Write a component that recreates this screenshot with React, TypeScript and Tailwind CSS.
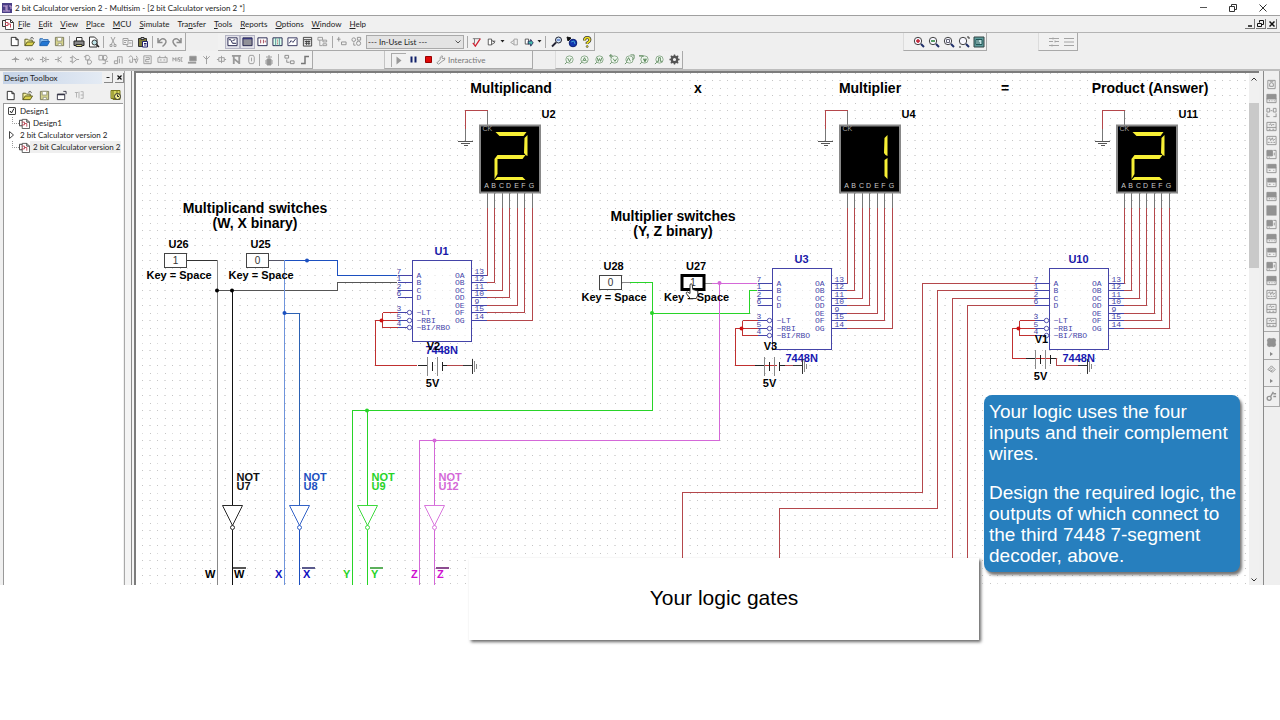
import type { ReactNode } from "react";

const RED = "#b4474b";
const PIN = "#4444a8";
const SANS = "'Liberation Sans', Arial, sans-serif";
const MONO = "'Liberation Mono', 'Courier New', monospace";

function Icon({ children, size = 12 }: { children: ReactNode; size?: number }) {
  return (
    <svg width={size} height={size} viewBox="0 0 12 12" fill="none" strokeWidth="1" stroke="currentColor" aria-hidden="true">
      {children}
    </svg>
  );
}

function Tool({ label, children, pressed }: { label: string; children: ReactNode; pressed?: boolean }) {
  return (
    <button
      type="button"
      aria-label={label}
      className={
        pressed
          ? "flex h-[14px] w-[15px] shrink-0 items-center justify-center border border-[#b4b4c4] bg-[#e2e2ea]"
          : "flex h-[14px] w-[15px] shrink-0 items-center justify-center"
      }
    >
      {children}
    </button>
  );
}

function Sep() {
  return (
    <span className="flex w-1 shrink-0 justify-center">
      <span className="h-3 w-px bg-[#a8a8a8]" />
    </span>
  );
}

function Bar({ children, className = "" }: { children: ReactNode; className?: string }) {
  return (
    <div className={"flex h-[18px] shrink-0 items-center border-r border-b border-[#a9a9a9] bg-[#f1f1f1] " + className}>
      {children}
    </div>
  );
}

function DropArrow({ label }: { label: string }) {
  return (
    <button type="button" aria-label={label} className="flex w-[7px] shrink-0 justify-center">
      <svg width="5" height="3" viewBox="0 0 5 3"><path d="M0.5 0h4L2.5 2.5z" fill="#222" /></svg>
    </button>
  );
}

const newFile = <path d="M2.5 1.5h5l2.5 2.5v6.5h-7.5zM7.5 1.5v2.5h2.5" fill="#fff" stroke="#222" />;
const openFile = (
  <>
    <path d="M1 10.5V3.5h3l1 1h4v2" fill="#f4f0a0" stroke="#55551c" />
    <path d="M1 10.5l2.500-4h8l-2.500 4z" fill="#d8d04c" stroke="#55551c" />
    <path d="M7 2.500q2-2 3.500 0.500" stroke="#333" />
  </>
);
const saveFile = (
  <>
    <path d="M1.500 1.500h9v9h-9z" fill="#d4d28c" stroke="#77775a" />
    <path d="M3.500 1.500h5v4h-5zM4.500 8h3.500v2.500h-3.500z" fill="#fff" stroke="#9a9a80" />
  </>
);
const schematicIcon = (
  <>
    <path d="M3.500 1.500h5l3 3v7h-8z" fill="#fff" stroke="#555" />
    <path d="M8.500 1.500v3h3" stroke="#333" />
    <path d="M0.500 2.500h3M0.500 8.500h3M0.500 2.500v6" stroke="#333" />
    <path d="M3 4.500h3v3H3M6 6h2.500M8.500 6v3.500" stroke="#c04858" />
  </>
);

const fileTools = [
  { label: "New", icon: newFile },
  { label: "Open", icon: openFile },
  {
    label: "Open samples",
    icon: (
      <>
        <path d="M1 10.500V3h3l1 1h5v2" fill="#8cc0f0" stroke="#1d5fae" />
        <path d="M1 10.500l2-4.500h8.500l-2.500 4.500z" fill="#2277d4" stroke="#1d5fae" />
      </>
    ),
  },
  { label: "Save", icon: saveFile },
];

const printTools = [
  {
    label: "Print",
    icon: (
      <>
        <path d="M3.500 5V1.500h5.500V5" fill="#fff" stroke="#333" />
        <path d="M1 5h10v4.500H1z" fill="#888" stroke="#222" />
        <path d="M3 8.500h6v2H3z" fill="#e4e08a" stroke="#333" />
      </>
    ),
  },
  {
    label: "Print preview",
    icon: (
      <>
        <path d="M1.500 1h5l2.500 2.500v7.500h-7.500z" fill="#fff" stroke="#333" />
        <circle cx="6.500" cy="6.500" r="2.500" fill="#bfe4e8" stroke="#333" />
        <path d="M8.500 8.500l2.500 2.500" stroke="#222" strokeWidth="1.500" />
      </>
    ),
  },
];

const editTools = [
  {
    label: "Cut",
    icon: <path d="M4 1l3.500 7M8 1L4.500 8M3 8.500h2v2H3zM7 8.500h2v2H7z" stroke="#a0a0a0" />,
  },
  {
    label: "Copy",
    icon: <path d="M1 2.500h5v6H1zM6 4.500h4.500v6H5V8.500M2 4.500h3M2 6.500h2M7 7h2.500" stroke="#a0a0a0" />,
  },
  {
    label: "Paste",
    icon: (
      <>
        <path d="M1.500 2.500h8v8h-8z" fill="#7f7b3a" stroke="#333" />
        <path d="M4 1.500h3v2H4z" fill="#ccc" stroke="#333" />
        <path d="M5.500 5.500h5v5.500h-5z" fill="#fff" stroke="#20206a" />
        <path d="M7 7.500h2.500M7 9h2.500" stroke="#20206a" />
      </>
    ),
  },
];

const historyTools = [
  { label: "Undo", icon: <path d="M2 2v4.500h4.500M2.500 6Q6 1 9 3.500T6.500 10.500" stroke="#8c8c8c" strokeWidth="1.500" /> },
  { label: "Redo", icon: <path d="M10 2v4.500H5.500M9.500 6Q6 1 3 3.500T5.500 10.500" stroke="#8c8c8c" strokeWidth="1.500" /> },
];

const viewTools = [
  { label: "Design toolbox", icon: <path d="M1 2h10v8.500H1zM2 4h2l2 4h4M6 5l3-1" fill="#fff" stroke="#20204a" />, pressed: true },
  { label: "Spreadsheet view", icon: <><path d="M1 2h10v8.500H1z" fill="#909098" stroke="#20204a" /><path d="M1 3h10" stroke="#20207a" /></>, pressed: true },
  { label: "SPICE netlist viewer", icon: <><path d="M1 2h10v8.500H1z" fill="#fff" stroke="#20204a" /><path d="M4 4v4M7 4v4M9 5v2" stroke="#a04050" /></> },
  { label: "Breadboard view", icon: <><path d="M1 2h10v8.500H1z" fill="#dfe" stroke="#20204a" /><path d="M4 2v8.500M8 2v8.500" stroke="#4d8c8c" /><path d="M6 4v5" stroke="#b04050" strokeDasharray="1 1" /></> },
  { label: "Grapher", icon: <path d="M1 2h10v8.500H1zM2.500 8l2-3 2 2 3-4" fill="#fff" stroke="#30305a" /> },
  { label: "Postprocessor", icon: <path d="M1.500 1.500h9v9.500h-9zM2 4h8M3 6h6M3 8h6M5 5v5M7.500 5v5" fill="#e8e8e8" stroke="#404040" /> },
  { label: "Parent sheet", icon: <path d="M1 1.500h5v3H1zM6.500 4.500h4v2h-4zM6.500 8.500h4v2h-4zM3 4.500v6h3" stroke="#999" /> },
];

const componentTools = [
  { label: "Create component", icon: <path d="M3 1v5M1 3.500h4M6 6.500h5v3H6z" stroke="#8f8f8f" /> },
  { label: "Database manager", icon: <path d="M1 4a2 2 0 1 0 4 0a2 2 0 1 0-4 0M7 1.500h3.500v3H7zM6 8a2 2 0 1 0 4.500 0a2 2 0 1 0-4.500 0M3 7v3h2" stroke="#8f8f8f" /> },
];

const placeTools = [
  { label: "Source", icon: <path d="M2 6h8M6 3v6M4 5h4" /> },
  { label: "Basic", icon: <path d="M1 6h1l1-2 1.500 3.500L6 4l1.500 3.500L9 4l1 2h1" /> },
  { label: "Diode", icon: <path d="M1 6h3M4 3v6l3-3zM7.500 3v6M8 6h3" /> },
  { label: "Transistor", icon: <path d="M1 6h3M4.500 3v6M4.500 6l4-3M4.500 6l4 3" /> },
  { label: "Analog", icon: <path d="M3.500 2v8l5-4zM1 4h2.500M1 8h2.500M8.500 6H11" /> },
  { label: "TTL", icon: <path d="M3 1.500h3q3 2 0 5H3zM1 3h2M5 6.500h3q3 2 0 4.500H5z" /> },
  { label: "CMOS", icon: <path d="M1 1.500h4v5H1zM6 1.500h3q2 2 0 5H6zM5 6.500h3v4H5M9 8h2" /> },
  { label: "Misc digital", icon: <path d="M5 3h5v7.500M5 3v7.500H1.500V7.500H5M7 5v5" /> },
  { label: "Mixed", icon: <path d="M1 4q2-4 4 0v5H2V6M6 6h3q2-2 0-4M7 5l2 5 2-5" /> },
  { label: "Indicator", icon: <path d="M2 2h8v8.500H2zM4 4h4v2H4v2.500h4" /> },
  { label: "Power", icon: <path d="M1 4h10v5H1zM3 6.500h2M7 6.500h2M3 2v2M9 2v2" /> },
  { label: "Misc", icon: <path d="M1 8V4l1.500 2L4 4v4M5.500 4v4M9 4H7v2h1.500v2H7M11.500 4h-1.500v4h1.500" /> },
  { label: "Peripherals", icon: <><path d="M3 2.500h7v5H3z" fill="#8f8f8f" /><path d="M1 9.500h9" strokeWidth="2" /></> },
  { label: "RF", icon: <path d="M6 11V2M2.500 2.500L6 6l3.500-3.500" /> },
  { label: "Electromechanical", icon: <path d="M1 6h2M9 6h2M3 4h6v4H3zM6 2v8" /> },
  { label: "NI component", icon: <path d="M1 2h10M3 2v9M9 2v9M3 5l6 5" strokeWidth="2" /> },
  { label: "Connector", icon: <path d="M4 1.500h4l1 2v5l-1 2H4l-1-2v-5zM6 4v4" /> },
];

const probeTools = [
  { label: "Voltage probe", icon: <path d="M4 4.500l2 4 2-4" /> },
  { label: "Current probe", icon: <path d="M4 8l2-4 2 4M5 7h2" /> },
  { label: "Power probe", icon: <path d="M3.500 4l1.200 4L6 5l1.200 3L8.500 4" /> },
  { label: "Differential probe", icon: <path d="M4.500 5l2 3 2-3M0 2h4M2 0v4" /> },
  { label: "Voltage and current probe", icon: <path d="M3 8l2-4 2 4M7 1h4v4L9 6" /> },
  { label: "Voltage reference", icon: <path d="M0 2h5M5 5l1.500 3L8 5" strokeWidth="1.500" /> },
  { label: "Digital probe", icon: <path d="M3 8h2V4h2v4h2" /> },
];

const zoomTools = [
  { label: "Zoom in", mark: <path d="M3 5h4M5 3v4" stroke="#c02030" strokeWidth="1.500" /> },
  { label: "Zoom out", mark: <path d="M3 5h4" stroke="#208030" strokeWidth="1.500" /> },
  { label: "Zoom area", mark: <path d="M3.500 3.500h3v3h-3z" stroke="#667" /> },
  { label: "Zoom sheet", mark: <path d="M9 1h2v2M1 11h2" stroke="#333" /> },
];

const menus = ["File", "Edit", "View", "Place", "MCU", "Simulate", "Transfer", "Tools", "Reports", "Options", "Window", "Help"];
const accessIndex: Record<string, number> = { Transfer: 3 };

const instruments = [
  "Multimeter", "Function generator", "Wattmeter", "Oscilloscope", "Four channel oscilloscope", "Bode plotter",
  "Frequency counter", "Word generator", "Logic converter", "Logic analyzer", "IV analyzer", "Distortion analyzer",
  "Spectrum analyzer", "Network analyzer", "Agilent function generator", "Agilent multimeter", "Agilent oscilloscope",
  "Tektronix oscilloscope",
];

// Instrument glyphs repeat a handful of panel layouts
const panels = [
  <path d="M2 1.500h8v9H2zM4 3h4M4 5l2-1 2 1v3H4z" />,
  <><path d="M1 1.500h10v5H1z" fill="#929292" /><path d="M1 6v4.500h10V6M3 8.500h1.500M6 8.500h1M8.500 8.500h1" /></>,
  <path d="M1 1.500h3v4H1zM8 1.500h3v4H8zM1 7v4M1 10.500h3M11 7v4M8 10.500h3M5 4h2" />,
  <path d="M1 1.500h10v9H1zM1 7h10M3 4h1l1-1 1 2 1-1h2M3 9h2M7 9h2" />,
  <path d="M1 1.500h10v9H1zM2 5l2-2 1 3 2-3 1 3 2-2M2 8h2M5 8h2M8 8h2" />,
  <><path d="M1 1.500h6v6H1z" fill="#929292" /><path d="M1 8v2.500h10V1.500H8M3 9h1M9 4v3" /></>,
  <><path d="M2 1.500h9v4H2z" fill="#929292" /><path d="M1 1v9.500h10V5M3 8h2M8 8h1" /></>,
];
const panelOrder = [0, 1, 2, 3, 4, 5, 6, 6, 1, 7, 5, 1, 6, 5, 1, 4, 3, 3];

function TitleBar() {
  return (
    <header className="flex h-4 items-center border-b border-[#a0a0a0] bg-white pl-0.5 text-[8px] text-[#222]">
      <svg width="10" height="10" viewBox="0 0 10 10" aria-hidden="true">
        <rect width="10" height="10" fill="#4a3f86" />
        <path d="M1 3h3v4M5 2v6M7 3h2v3M1 8h7" stroke="#c9a9d8" fill="none" />
      </svg>
      <h1 className="ml-[3px] whitespace-nowrap">2 bit Calculator version 2 - Multisim - [2 bit Calculator version 2 *]</h1>
      <div className="ml-auto flex pr-0.5">
        <button type="button" aria-label="Minimize" className="flex h-[14px] w-[30px] items-center justify-center">
          <svg width="7" height="7" viewBox="0 0 7 7" stroke="#555"><path d="M0 3.500h7" /></svg>
        </button>
        <button type="button" aria-label="Restore" className="flex h-[14px] w-[30px] items-center justify-center">
          <svg width="8" height="8" viewBox="0 0 8 8" fill="none" stroke="#333"><path d="M0.500 2.500h5v5h-5zM2.500 2V0.500h5v5H6" /></svg>
        </button>
        <button type="button" aria-label="Close" className="flex h-[14px] w-[30px] items-center justify-center">
          <svg width="8" height="8" viewBox="0 0 8 8" stroke="#333"><path d="M0.500 0.500l7 7M7.500 0.500l-7 7" /></svg>
        </button>
      </div>
    </header>
  );
}

function MenuBar() {
  return (
    <nav className="flex h-[17px] items-center border-b border-[#b4b4b4] bg-[#f0f0f0] pl-0.5 text-[8px] text-[#222]">
      <Icon>{schematicIcon}</Icon>
      <div className="ml-1 flex gap-2">
        {menus.map((menu) => {
          const i = accessIndex[menu] ?? 0;
          return (
            <button key={menu} type="button">
              {menu.slice(0, i)}
              <span className="underline">{menu[i]}</span>
              {menu.slice(i + 1)}
            </button>
          );
        })}
      </div>
      <div className="ml-auto flex gap-px pr-[3px]">
        <button type="button" aria-label="Minimize document" className="flex h-[10px] w-[10px] items-center justify-center border-r border-b border-[#777]">
          <svg width="6" height="6" viewBox="0 0 6 6" stroke="#111"><path d="M1 5h4" strokeWidth="1.500" /></svg>
        </button>
        <button type="button" aria-label="Restore document" className="flex h-[10px] w-[10px] items-center justify-center border-r border-b border-[#777]">
          <svg width="7" height="7" viewBox="0 0 7 7" fill="none" stroke="#111"><path d="M0.500 3.500h4v3h-4zM2.500 2.500v-2h4v4h-2" /></svg>
        </button>
        <button type="button" aria-label="Close document" className="flex h-[10px] w-[10px] items-center justify-center border-r border-b border-[#777]">
          <svg width="6" height="6" viewBox="0 0 6 6" stroke="#111" strokeWidth="1.500"><path d="M0.500 0.500l5 5M5.500 0.500l-5 5" /></svg>
        </button>
      </div>
    </nav>
  );
}

function MainToolbar() {
  return (
    <div className="flex h-[18px] bg-[#efefef]">
      <Bar className="pl-[7px] pr-px">
        {fileTools.map((t) => <Tool key={t.label} label={t.label}><Icon size={11}>{t.icon}</Icon></Tool>)}
        <Sep />
        {printTools.map((t) => <Tool key={t.label} label={t.label}><Icon>{t.icon}</Icon></Tool>)}
        <Sep />
        {editTools.map((t) => <Tool key={t.label} label={t.label}><Icon>{t.icon}</Icon></Tool>)}
        <Sep />
        {historyTools.map((t) => <Tool key={t.label} label={t.label}><Icon>{t.icon}</Icon></Tool>)}
      </Bar>
      <Bar className="ml-8 pl-[7px]">
        {viewTools.map((t) => <Tool key={t.label} label={t.label} pressed={t.pressed}><Icon size={11}>{t.icon}</Icon></Tool>)}
        <Sep />
        {componentTools.map((t) => <Tool key={t.label} label={t.label}><Icon size={11}>{t.icon}</Icon></Tool>)}
        <div className="relative ml-0.5 mr-px">
          <select aria-label="In-use list" className="block h-[14px] w-[98px] appearance-none border border-[#a9a9a9] bg-[#e3e3e3] pl-px text-[8px] leading-3 text-[#222]">
            <option>--- In-Use List ---</option>
          </select>
          <svg className="pointer-events-none absolute right-[3px] top-[5px]" width="6" height="4" viewBox="0 0 6 4" fill="none" stroke="#555"><path d="M0.500 0.500l2.500 2.500 2.500-2.500" /></svg>
        </div>
        <Sep />
        <Tool label="Electrical rules check">
          <Icon size={10}><path d="M1 2h9M3 2v6" stroke="#666" /><path d="M1 7l3 4L10 2" stroke="#d02030" strokeWidth="1.500" /></Icon>
        </Tool>
        <Tool label="Transfer to Ultiboard"><Icon size={10}><path d="M1.500 2.500h4v7h-4zM5.500 4l4 2.500-4 2.500M7 5h3" fill="#fff" stroke="#444" /></Icon></Tool>
        <DropArrow label="Transfer options" />
        <Tool label="Backward annotate"><Icon size={10}><path d="M6 2.500h4v7H6zM6 4L2 6.500l4 2.500" stroke="#999" /></Icon></Tool>
        <Tool label="Forward annotate">
          <Icon size={10}><path d="M1.500 2.500h4v6h-4z" fill="#fff" stroke="#444" /><path d="M5 5h3v-2l3 4-3 4V8.500H5z" fill="#46c0b0" stroke="#225" /></Icon>
        </Tool>
        <DropArrow label="Annotate options" />
        <Sep />
        <div className="flex pl-0.5">
          <Tool label="Find examples">
            <Icon><circle cx="7.500" cy="4" r="3" fill="#cfe4f4" stroke="#223" /><path d="M5 6.500L1 10.500" stroke="#223" strokeWidth="1.800" /><path d="M6 4h3" stroke="#2244b4" /></Icon>
          </Tool>
          <Tool label="Education website">
            <Icon><circle cx="7" cy="7" r="3.800" fill="#1237b0" stroke="#0b1f70" /><path d="M5 6l3-1 1 3" stroke="#3f9ad0" /><path d="M1 1l4 1-3 3z" fill="#111" stroke="#111" /></Icon>
          </Tool>
          <Tool label="Help">
            <Icon><path d="M3.500 4.500q0-3 2.700-3t2.700 2.500q0 1.500-2.700 3v1" stroke="#333" strokeWidth="3" /><path d="M3.500 4.500q0-3 2.700-3t2.700 2.500q0 1.500-2.700 3v1" stroke="#f0e020" strokeWidth="1.500" /><circle cx="6.200" cy="10.500" r="1" fill="#f0e020" stroke="#333" strokeWidth="0.600" /></Icon>
          </Tool>
        </div>
      </Bar>
      <Bar className="ml-[308px] border-l border-l-[#dcdcdc] pl-[7px]">
        {zoomTools.map((t) => (
          <Tool key={t.label} label={t.label}>
            <Icon><circle cx="5" cy="5" r="3.700" fill="#f7f7ff" stroke="#444" />{t.mark}<path d="M8 8l3 3" stroke="#20306a" strokeWidth="2" /></Icon>
          </Tool>
        ))}
        <Tool label="Full screen">
          <Icon><path d="M1 1h10v10H1z" fill="#5d9c9c" stroke="#344" /><path d="M3 3.500h6v5H3z" fill="#bfe0e0" stroke="#255" /><path d="M4 5h2M4 7h3" stroke="#255" /></Icon>
        </Tool>
      </Bar>
      <Bar className="ml-[51px] border-l border-l-[#dcdcdc] pl-[7px] pr-px">
        <Tool label="Ladder rungs"><Icon><path d="M1 2.500h10M1 5.500h4M7 5.500h4M1 9.500h10M5 1.500v2M7 4.500v2M4 8.500v2" stroke="#a4a4a4" /></Icon></Tool>
        <Tool label="Ladder lines"><Icon><path d="M1 2.500h10M1 6h10M1 9.500h10" stroke="#a4a4a4" /></Icon></Tool>
      </Bar>
    </div>
  );
}

function PlaceToolbar() {
  return (
    <div className="flex h-[18px] bg-[#efefef] text-[#9a9a9a]">
      <Bar className="pl-[9px]">
        <div className="flex w-[248px] justify-between">
          {placeTools.map((t) => (
            <button key={t.label} type="button" aria-label={t.label} className="flex w-3 items-center justify-center">
              <Icon size={11}>{t.icon}</Icon>
            </button>
          ))}
        </div>
        <Sep />
        <Tool label="Place MCU"><Icon><path d="M4 5h4v6H4z" fill="#8a8a8a" /><path d="M6 1v4M3 3h6M2 7h8M2 9h8" /></Icon></Tool>
        <Sep />
        <div className="flex pl-0.5">
          <Tool label="Hierarchical block"><Icon size={11}><path d="M1 1.500h4v3H1zM7 7.500h4v3H7zM3 6v3h3" stroke="#888" /></Icon></Tool>
          <Tool label="Bus"><Icon><path d="M2 9.500h4v-7h4" stroke="#777" strokeWidth="1.500" /></Icon></Tool>
        </div>
      </Bar>
      <Bar className="ml-[71px] w-[149px] border-l border-l-[#c4c4c4] pl-[6px]">
        <button type="button" aria-label="Run" className="flex h-[14px] w-[15px] items-center justify-center border-l border-t border-[#aaa]">
          <svg width="6" height="9" viewBox="0 0 6 9"><path d="M0.500 0.500l5 4-5 4z" fill="#999" /></svg>
        </button>
        <Tool label="Pause"><svg width="7" height="7" viewBox="0 0 7 7" fill="#10206a"><path d="M0.500 0.500h2v6h-2zM4.500 0.500h2v6h-2z" /></svg></Tool>
        <Tool label="Stop"><svg width="7" height="7" viewBox="0 0 7 7"><path d="M0.500 0.500h6v6h-6z" fill="#e00808" stroke="#900" /></svg></Tool>
        <button type="button" className="flex items-center gap-0.5 text-[8px] text-[#777]">
          <Icon size={10}><path d="M1 9.500L5 5.500q-1-3 2-4.500l1 0.500-1 2 1.500 1 2-1q1 3-3 4L3 11z" stroke="#888" /></Icon>
          Interactive
        </button>
      </Bar>
      <Bar className="ml-[22px] border-l border-l-[#dcdcdc] pl-[6px] text-[#5d8a5d]">
        {probeTools.map((t) => (
          <Tool key={t.label} label={t.label}>
            <Icon size={11}><circle cx="6" cy="6" r="4" fill="#eef6ee" stroke="#8aa88a" />{t.icon}<path d="M3 9l-2 2" /></Icon>
          </Tool>
        ))}
        <Tool label="Probe settings">
          <Icon size={11}><circle cx="6" cy="6" r="3" stroke="#555" strokeWidth="2.500" /><path d="M6 0.500v2M6 9.500v2M0.500 6h2M9.500 6h2M2 2l1.500 1.500M8.500 8.500L10 10M10 2L8.500 3.500M2 10l1.500-1.500" stroke="#555" strokeWidth="1.500" /></Icon>
        </Tool>
      </Bar>
    </div>
  );
}

function DesignToolbox() {
  return (
    <aside className="flex w-[125px] shrink-0 flex-col border-r border-[#a8a8a8] bg-[#f0f0f0] pl-[3px] text-[8px] text-[#222]">
      <div className="flex h-[13px] items-center">
        <h2 className="h-3 flex-1 bg-linear-to-r from-[#c5d3e7] to-[#e4ebf4] pl-px leading-3">Design Toolbox</h2>
        <button type="button" aria-label="Hide toolbox" className="ml-0.5 flex h-[10px] w-[9px] items-center justify-center border-r border-b border-[#888]">
          <svg width="4" height="4" viewBox="0 0 4 4" stroke="#222"><path d="M0.500 2.500h3" /></svg>
        </button>
        <button type="button" aria-label="Close toolbox" className="ml-0.5 flex h-[10px] w-[9px] items-center justify-center border-r border-b border-[#888]">
          <svg width="5" height="5" viewBox="0 0 5 5" stroke="#111" strokeWidth="1.200"><path d="M0.500 0.500l4 4M4.500 0.500l-4 4" /></svg>
        </button>
      </div>
      <div className="mt-1 flex h-[15px] items-center gap-0.5 pb-px pr-px">
        {[fileTools[0], fileTools[1], fileTools[3]].map((t) => (
          <Tool key={t.label} label={t.label + " design"}><Icon size={11}>{t.icon}</Icon></Tool>
        ))}
        <Tool label="Close design"><Icon size={11}><path d="M1.500 4.500h8v6h-8z" fill="#fff" stroke="#334" /><path d="M1.500 5h8" stroke="#334" strokeWidth="1.500" /><path d="M8 1.500h3v3" stroke="#334" /></Icon></Tool>
        <Tool label="Rename"><Icon size={10}><path d="M1 3h4M3 3v6M6 2v8M8 2h3v8H8M8 6h3" stroke="#a8a8a8" /></Icon></Tool>
        <span className="flex-1" />
        <Tool label="Version history">
          <Icon><path d="M1 1.500h6v8H1zM3 1.500h7v9H3z" fill="#d8d860" stroke="#77771c" /><circle cx="7.500" cy="7.500" r="3" fill="#f4f090" stroke="#333" /><path d="M7.500 5.500v2H9" stroke="#222" /></Icon>
        </Tool>
      </div>
      <ul className="h-0 min-h-0 w-[120px] flex-1 overflow-hidden border-l border-t border-[#999] bg-white pt-px leading-3">
        <li className="whitespace-nowrap">
          <label className="relative flex h-3 items-center pl-1">
            <input type="checkbox" defaultChecked className="mr-1 h-2 w-2 appearance-none rounded-[1px] border border-[#444] bg-white" />
            <svg className="pointer-events-none absolute left-[5px] top-[3px]" width="6" height="6" viewBox="0 0 6 6" fill="none" stroke="#222"><path d="M1 3l1.500 2L5 0.500" /></svg>
            Design1
          </label>
        </li>
        <li className="flex h-3 items-center whitespace-nowrap pl-2">
          <svg width="7" height="12" viewBox="0 0 7 12" fill="none" stroke="#999" strokeDasharray="1 1"><path d="M0.500 0v6.500h7" /></svg>
          <Icon size={11}>{schematicIcon}</Icon>
          <span className="pl-[3px]">Design1</span>
        </li>
        <li className="flex h-3 items-center whitespace-nowrap pl-[3px]">
          <button type="button" className="flex h-3 items-center gap-[5px]">
            <svg width="8" height="8" viewBox="0 0 8 8" fill="none" stroke="#444"><path d="M2.500 0.500v7l4-3.500z" /></svg>
            2 bit Calculator version 2
          </button>
        </li>
        <li className="flex h-3 items-center whitespace-nowrap pl-2">
          <svg width="7" height="12" viewBox="0 0 7 12" fill="none" stroke="#999" strokeDasharray="1 1"><path d="M0.500 0v6.500h7" /></svg>
          <Icon size={11}>{schematicIcon}</Icon>
          <span className="bg-[#efefef] pl-[3px]">2 bit Calculator version 2</span>
        </li>
      </ul>
    </aside>
  );
}

function Wire({ d, color, width = 1 }: { d: string; color: string; width?: number }) {
  return <path d={d} stroke={color} strokeWidth={width} fill="none" shapeRendering="crispEdges" />;
}

function Label({ x, y, children, color = "#000", size = 11, anchor = "start" }: {
  x: number; y: number; children: ReactNode; color?: string; size?: number; anchor?: "start" | "middle" | "end";
}) {
  return (
    <text x={x} y={y} fill={color} fontSize={size} fontWeight="700" fontFamily={SANS} textAnchor={anchor}>
      {children}
    </text>
  );
}

const inputs = [["7", "A"], ["1", "B"], ["2", "C"], ["6", "D"]];
const controls = [["3", "~LT"], ["5", "~RBI"], ["4", "~BI/RBO"]];
const outputs = [["13", "OA"], ["12", "OB"], ["11", "OC"], ["10", "OD"], ["9", "OE"], ["15", "OF"], ["14", "OG"]];

// 7448 decoder with its seven wires running up to the display pins
function Decoder({ x, y, name, batteryY }: { x: number; y: number; name: string; batteryY: number }) {
  const row = (i: number) => y + 15 + Math.floor(i * 7.5);
  return (
    <g>
      {controls.map(([pin], i) => (
        <Wire key={pin} d={`M${x - 30} ${row(i + 5)}H${x - 15}`} color="#c03030" />
      ))}
      <Wire d={`M${x - 30} ${row(5)}V${row(7)}M${x - 30} ${row(6)}H${x - 37}V${batteryY}H${x + 4}`} color="#c03030" />
      <circle cx={x - 31} cy={row(6)} r="2" fill="#d01010" />
      <rect x={x} y={y} width="59" height="81" fill="#fff" fillOpacity="0.600" stroke={PIN} shapeRendering="crispEdges" />
      <g fontFamily={MONO} fontSize="8" fill={PIN}>
        {inputs.map(([pin, label], i) => (
          <g key={pin}>
            <Wire d={`M${x - 15} ${row(i)}H${x}`} color={PIN} />
            <text x={x - 16} y={row(i) - 2}>{pin}</text>
            <text x={x + 4} y={row(i) + 2}>{label}</text>
          </g>
        ))}
        {controls.map(([pin, label], i) => (
          <g key={pin}>
            <Wire d={`M${x - 15} ${row(i + 5)}H${x - 6}`} color={PIN} />
            <circle cx={x - 3} cy={row(i + 5)} r="2.200" fill="#fff" stroke={PIN} strokeWidth="0.900" />
            <text x={x - 16} y={row(i + 5) - 2}>{pin}</text>
            <text x={x + 4} y={row(i + 5) + 2}>{label}</text>
          </g>
        ))}
        {outputs.map(([pin, label], i) => {
          const px = x + 75 + Math.floor(i * 7.5);
          return (
            <g key={pin}>
              <Wire d={`M${x + 59} ${row(i)}H${x + 74}`} color={PIN} />
              <Wire d={`M${x + 74} ${row(i)}H${px}V205`} color={RED} />
              <Wire d={`M${px} 208V193`} color="#777" />
              <text x={x + 62} y={row(i) - 2}>{pin}</text>
              <text x={x + 52} y={row(i) + 2} textAnchor="end">{label}</text>
            </g>
          );
        })}
      </g>
      <Label x={x + 29} y={y - 6} color="#1818a8" anchor="middle">{name}</Label>
      <Label x={x + 13} y={y + 93} color="#1818b0">7448N</Label>
    </g>
  );
}

function Battery({ x, y, name }: { x: number; y: number; name: string }) {
  return (
    <g>
      <Wire d={`M${x - 10} ${y}H${x}M${x + 15} ${y}H${x + 20}M${x + 5} ${y - 4}v9M${x + 15} ${y - 4}v9`} color="#222" />
      <Wire d={`M${x} ${y - 9}v19M${x + 10} ${y - 9}v19`} color="#888" />
      <Label x={x + 6} y={y - 16} anchor="middle">{name}</Label>
      <Label x={x + 5} y={y + 21} anchor="middle">5V</Label>
    </g>
  );
}

function SideGround({ x, y }: { x: number; y: number }) {
  return (
    <g>
      <Wire d={`M${x - 10} ${y}H${x}M${x} ${y - 7}v15`} color="#333" />
      <Wire d={`M${x + 2} ${y - 5}v11M${x + 4} ${y - 2}v5`} color="#888" />
    </g>
  );
}

const segments: Record<string, string> = {
  a: "16,61 47,61 44,65 20,65",
  b: "48,64 48,85 46,84 44.500,82 45,67",
  c: "48,87 48,108 45,105 45,89",
  d: "18,106 43,106 46,109 15,109",
  e: "15,88 18,87 18,103 15,108",
  g: "18,84 46,84 43,88 15,88",
};

function SevenSegment({ x, lit, name }: { x: number; lit: string; name: string }) {
  return (
    <g>
      <Wire d={`M${x - 14} 129V110.500H${x + 8}`} color={RED} />
      <Wire d={`M${x + 8} 111V126M${x - 14} 129V141`} color="#777" />
      <Wire d={`M${x - 22} 141.500h15M${x - 19} 143.500h9M${x - 16} 145.500h4`} color="#555" />
      <rect x={x + 0.5} y="125.500" width="60" height="67" fill="#000" stroke="#888" strokeWidth="2" />
      <g transform={`translate(${x} 71)`} fill="#f8f035">
        {lit.split("").map((s) => <polygon key={s} points={segments[s]} />)}
      </g>
      <g fontFamily={SANS} fontSize="7" fill="#c8c8c8">
        <text x={x + 3} y="131" fill="#a0a0a0">CK</text>
        {"ABCDEFG".split("").map((c, i) => (
          <text key={c} x={x + 7 + Math.floor(i * 7.5)} y="188" textAnchor="middle">{c}</text>
        ))}
      </g>
      <Label x={x + 62} y={118}>{name}</Label>
    </g>
  );
}

function KeySwitch({ x, y, name, value, active }: { x: number; y: number; name: string; value: string; active?: boolean }) {
  return (
    <g>
      <Label x={x + 4} y={y - 6}>{name}</Label>
      <Label x={x - 18} y={y + 25}>Key = Space</Label>
      <rect x={x} y={y} width="22" height="14" fill="#fff" stroke={active ? "#000" : "#444"} strokeWidth={active ? 3 : 1} />
      <text x={x + 11} y={y + 10.5} fontSize="10" fontFamily={SANS} fill="#333" textAnchor="middle">{value}</text>
    </g>
  );
}

function Inverter({ x, name, color }: { x: number; name: string; color: string }) {
  return (
    <g>
      <path d={`M${x - 10} 505.500h20l-10 20z`} fill="#fff" stroke={color} strokeWidth="0.900" />
      <circle cx={x} cy="527.500" r="2" fill="#fff" stroke={color} strokeWidth="0.900" />
      <Wire d={`M${x} 530V590`} color={color} />
      <Label x={x + 4} y={481} color={color}>NOT</Label>
      <Label x={x + 4} y={490} color={color}>{name}</Label>
    </g>
  );
}

const BLUE = "#1c50c0";
const GREEN = "#28d428";
const VIOLET = "#d468d8";

const outputsRow = [
  { letter: "W", x: 205, barX: 234, color: "#000", bar: "#555" },
  { letter: "X", x: 275, barX: 303, color: "#1010c0", bar: "#5a5a8c" },
  { letter: "Y", x: 343, barX: 371, color: "#28d428", bar: "#5cb05c" },
  { letter: "Z", x: 411, barX: 437, color: "#d010d0", bar: "#8c4c90" },
];

function Schematic() {
  return (
    <svg className="block h-[512px] w-full min-w-0 flex-1 bg-white" role="img" aria-label="Schematic">
      <defs>
        <pattern id="grid" x="142" y="80" width="15" height="15" patternUnits="userSpaceOnUse">
          <path d="M0 0h1v1H0zM8 8h1v1H8z" fill="#c4c4c4" />
          <path d="M7 0h2v1H7zM0 8h1v1H0z" fill="#dadada" />
        </pattern>
      </defs>
      <g transform="translate(-136 -73)">
        <rect x="136" y="73" width="4000" height="512" fill="url(#grid)" />

        <Label x={511} y={93} size={14} anchor="middle">Multiplicand</Label>
        <Label x={698} y={93} size={14} anchor="middle">x</Label>
        <Label x={870} y={93} size={14} anchor="middle">Multiplier</Label>
        <Label x={1005} y={93} size={14} anchor="middle">=</Label>
        <Label x={1150} y={93} size={14} anchor="middle">Product (Answer)</Label>
        <Label x={255} y={213} size={14} anchor="middle">Multiplicand switches</Label>
        <Label x={255} y={228} size={14} anchor="middle">(W, X binary)</Label>
        <Label x={673} y={221} size={14} anchor="middle">Multiplier switches</Label>
        <Label x={673} y={236} size={14} anchor="middle">(Y, Z binary)</Label>

        {/* W */}
        <Wire d="M187 260.500H217" color="#333" />
        <Wire d="M217 260V590" color="#888" />
        <Wire d="M217 290.500H337.500V282.500H397" color="#555" />
        <Wire d="M232.500 290V505" color="#111" />
        <circle cx="217" cy="290.500" r="2" />
        <circle cx="232" cy="290.500" r="2" />

        {/* X */}
        <Wire d="M269 260.500H284" color="#556" />
        <Wire d="M284 260.500H337.500V275.500H397" color={BLUE} />
        <Wire d="M284.500 260V590" color="#6f94dc" />
        <Wire d="M284.500 313.500H299.500V505" color="#2c62b4" />
        <circle cx="307" cy="260.500" r="2" fill={BLUE} />
        <circle cx="284.500" cy="313" r="2" fill={BLUE} />

        {/* Y */}
        <Wire d="M622 282.500H630" color="#888" />
        <Wire d="M630 282.500H652.500V410.500H352.500V590M652 313.500H749.500V290.500H757M367.500 410V505" color={GREEN} />
        <circle cx="652" cy="313" r="2" fill={GREEN} />
        <circle cx="367" cy="410.500" r="2" fill={GREEN} />

        {/* Z */}
        <Wire d="M705 283.500H712" color="#888" />
        <Wire d="M712 283.500H757M719.500 283V440.500H419.500V590M434.500 440V505" color={VIOLET} />
        <circle cx="719.500" cy="283" r="2" fill={VIOLET} />
        <circle cx="434.500" cy="440.500" r="2" fill={VIOLET} />

        {/* answer decoder inputs */}
        <Wire d="M1035 283.500H922.500V492.500H682.500V590M1035 290.500H937.500V508.500H779.500V590M1035 298.500H952.500V590M1035 305.500H967.500V590" color={RED} />

        <Decoder x={412.5} y={260.5} name="U1" batteryY={365.5} />
        <Decoder x={772.5} y={268.5} name="U3" batteryY={365.5} />
        <Decoder x={1049.5} y={268.5} name="U10" batteryY={358.5} />

        <Battery x={427.5} y={365.5} name="V2" />
        <Wire d="M447 365.500H463" color={RED} />
        <SideGround x={472.5} y={365.5} />
        <Battery x={764.5} y={365.5} name="V3" />
        <Wire d="M785 365.500H793" color={RED} />
        <SideGround x={802.5} y={365.5} />
        <Battery x={1035.5} y={358.5} name="V1" />
        <Wire d="M1056.500 358V365.500H1078" color={RED} />
        <SideGround x={1087.5} y={365.5} />

        <SevenSegment x={479.5} lit="abged" name="U2" />
        <SevenSegment x={839.5} lit="bc" name="U4" />
        <SevenSegment x={1116.5} lit="abged" name="U11" />

        <KeySwitch x={164.5} y={253.5} name="U26" value="1" />
        <KeySwitch x={246.5} y={253.5} name="U25" value="0" />
        <KeySwitch x={599.5} y={275.5} name="U28" value="0" />
        <KeySwitch x={682} y={275.5} name="U27" value="1" active />

        <Inverter x={232.5} name="U7" color="#111" />
        <Inverter x={299.5} name="U8" color={BLUE} />
        <Inverter x={367.5} name="U9" color={GREEN} />
        <Inverter x={434.5} name="U12" color={VIOLET} />

        {outputsRow.map((o) => (
          <g key={o.letter}>
            <Label x={o.x} y={578} color={o.color}>{o.letter}</Label>
            <Label x={o.barX} y={578} color={o.color}>{o.letter}</Label>
            <Wire d={`M${o.barX - 1} 568h13`} color={o.bar} width={2} />
          </g>
        ))}

        {/* hand pointer */}
        <path
          d="M690 284.500q1.200-1.500 2.200 0l0.600 5 5 1.500v4l-1.500 3.500h-6l-4-5q-0.500-1.500 1.200-1.500l2.500 1.500z"
          fill="#fff"
          stroke="#222"
          strokeWidth="0.900"
        />
      </g>
    </svg>
  );
}

function ScrollBar() {
  return (
    <div className="flex w-[10px] shrink-0 flex-col items-center bg-[#f0f0f0]">
      <button type="button" aria-label="Scroll up" className="flex h-3 items-center">
        <svg width="6" height="4" viewBox="0 0 6 4" fill="none" stroke="#333"><path d="M0.500 3.500L3 1l2.500 2.500" /></svg>
      </button>
      <div className="mt-[18px] h-[165px] w-full bg-[#c9c9c9]" />
      <span className="flex-1" />
      <button type="button" aria-label="Scroll down" className="flex h-[10px] items-center">
        <svg width="6" height="4" viewBox="0 0 6 4" fill="none" stroke="#333"><path d="M0.500 0.500L3 3l2.500-2.500" /></svg>
      </button>
    </div>
  );
}

function InstrumentBar() {
  return (
    <div className="ml-1 w-[17px] shrink-0 border-l border-[#8a8a8a] bg-[#efefef] text-[#929292]">
      <div className="flex flex-col items-center border-r border-b border-[#a9a9a9] pt-[6px]">
        {instruments.map((name, i) => (
          <button key={name} type="button" aria-label={name} className="flex h-[14px] items-center">
            <Icon size={11}>{panels[panelOrder[i]] ?? <rect x="1" y="1" width="10" height="10" fill="#929292" />}</Icon>
          </button>
        ))}
        <span className="mt-[2px] h-px w-full bg-[#a9a9a9]" />
        <button type="button" aria-label="LabVIEW instruments" className="mt-[3px] flex h-[14px] items-center">
          <Icon size={11}><path d="M2 2h8v8H2z" fill="#929292" /><path d="M1 4h10M1 8h10M4 1v10M8 1v10" /></Icon>
        </button>
        <svg className="my-[3px]" width="3" height="4" viewBox="0 0 3 4"><path d="M0 0l3 2-3 2z" fill="#888" /></svg>
        <span className="h-px w-full bg-[#a9a9a9]" />
        <button type="button" aria-label="NI ELVISmx instruments" className="mt-[3px] flex h-[13px] items-center">
          <Icon size={11}><path d="M2 6l4-4 4 4-3 3zM4 6l3-2M5 8l3-2" /></Icon>
        </button>
        <svg className="my-[3px]" width="3" height="4" viewBox="0 0 3 4"><path d="M0 0l3 2-3 2z" fill="#888" /></svg>
        <span className="h-px w-full bg-[#a9a9a9]" />
        <button type="button" aria-label="Current clamp" className="my-[3px] flex h-[13px] items-center">
          <Icon size={11}><circle cx="3.500" cy="8" r="2.200" strokeWidth="1.500" /><path d="M5 6l3-5M8 6h3M8 3h3" strokeWidth="1.500" /></Icon>
        </button>
      </div>
    </div>
  );
}

export default function App() {
  return (
    <div className="min-h-screen overflow-x-hidden bg-white font-['Lato',sans-serif]">
      <TitleBar />
      <MenuBar />
      <MainToolbar />
      <PlaceToolbar />
      <main className="relative flex border-t-2 border-[#bdbdbd] bg-[#efefef]">
        <DesignToolbox />
        <div className="w-[9px] shrink-0 bg-[#f4f4f4]">
          <div className="h-full w-[7px] border-r border-[#8a8a8a]" />
        </div>
        <div className="flex min-w-0 flex-1 border-l-2 border-t-2 border-[#7c7c7c]">
          <Schematic />
          <ScrollBar />
        </div>
        <InstrumentBar />

        <section className="absolute left-[984px] top-[324px] w-[256px] rounded-lg bg-[#277fbe] pl-[5px] pt-[6px] pb-[6px] font-['Liberation_Sans',Arial,sans-serif] text-[19px] leading-[21px] text-white shadow-[2px_3px_3px_rgba(0,0,0,0.55)]">
          <p>Your logic uses the four inputs and their complement wires.</p>
          <p className="mt-[18px]">Design the required logic, the outputs of which connect to the third 7448 7-segment decoder, above.</p>
        </section>
        <section className="absolute left-[469px] top-[487px] flex h-[82px] w-[510px] items-center justify-center bg-white pb-0.5 font-['Liberation_Sans',Arial,sans-serif] text-[21px] text-black shadow-[2px_2px_3px_rgba(0,0,0,0.6)]">
          Your logic gates
        </section>
      </main>
    </div>
  );
}
